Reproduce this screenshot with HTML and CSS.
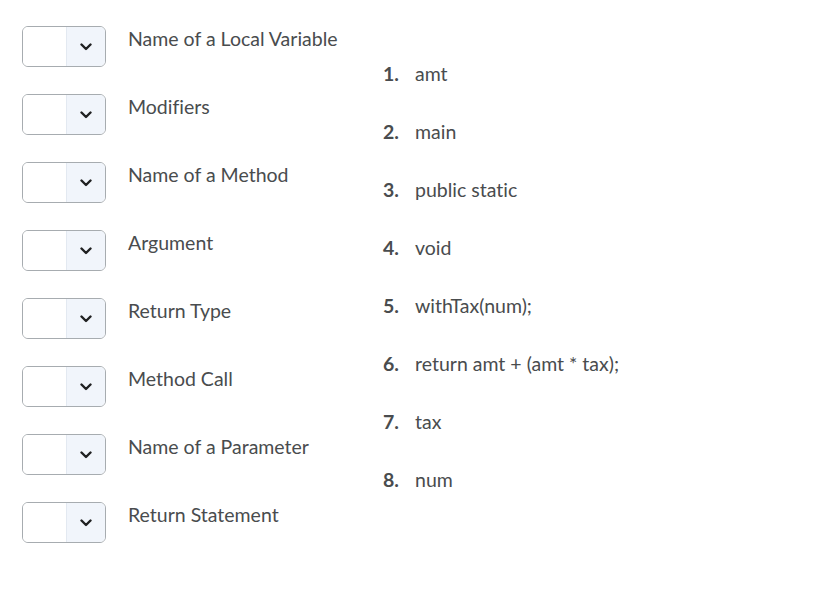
FILE: index.html
```html
<!DOCTYPE html>
<html>
<head>
<meta charset="utf-8">
<link rel="stylesheet" href="styles.css">
</head>
<body>
<div class="page">
  <div class="matches">
    <div class="row"><div class="select"><span class="val"></span><span class="btn"><svg width="12" height="8" viewBox="0 0 12 8"><path d="M1.5 1.5 L6 6 L10.5 1.5" fill="none" stroke="#202122" stroke-width="2.4" stroke-linecap="round" stroke-linejoin="round"/></svg></span></div><div class="label">Name of a Local Variable</div></div>
    <div class="row"><div class="select"><span class="val"></span><span class="btn"><svg width="12" height="8" viewBox="0 0 12 8"><path d="M1.5 1.5 L6 6 L10.5 1.5" fill="none" stroke="#202122" stroke-width="2.4" stroke-linecap="round" stroke-linejoin="round"/></svg></span></div><div class="label">Modifiers</div></div>
    <div class="row"><div class="select"><span class="val"></span><span class="btn"><svg width="12" height="8" viewBox="0 0 12 8"><path d="M1.5 1.5 L6 6 L10.5 1.5" fill="none" stroke="#202122" stroke-width="2.4" stroke-linecap="round" stroke-linejoin="round"/></svg></span></div><div class="label">Name of a Method</div></div>
    <div class="row"><div class="select"><span class="val"></span><span class="btn"><svg width="12" height="8" viewBox="0 0 12 8"><path d="M1.5 1.5 L6 6 L10.5 1.5" fill="none" stroke="#202122" stroke-width="2.4" stroke-linecap="round" stroke-linejoin="round"/></svg></span></div><div class="label">Argument</div></div>
    <div class="row"><div class="select"><span class="val"></span><span class="btn"><svg width="12" height="8" viewBox="0 0 12 8"><path d="M1.5 1.5 L6 6 L10.5 1.5" fill="none" stroke="#202122" stroke-width="2.4" stroke-linecap="round" stroke-linejoin="round"/></svg></span></div><div class="label">Return Type</div></div>
    <div class="row"><div class="select"><span class="val"></span><span class="btn"><svg width="12" height="8" viewBox="0 0 12 8"><path d="M1.5 1.5 L6 6 L10.5 1.5" fill="none" stroke="#202122" stroke-width="2.4" stroke-linecap="round" stroke-linejoin="round"/></svg></span></div><div class="label">Method Call</div></div>
    <div class="row"><div class="select"><span class="val"></span><span class="btn"><svg width="12" height="8" viewBox="0 0 12 8"><path d="M1.5 1.5 L6 6 L10.5 1.5" fill="none" stroke="#202122" stroke-width="2.4" stroke-linecap="round" stroke-linejoin="round"/></svg></span></div><div class="label">Name of a Parameter</div></div>
    <div class="row"><div class="select"><span class="val"></span><span class="btn"><svg width="12" height="8" viewBox="0 0 12 8"><path d="M1.5 1.5 L6 6 L10.5 1.5" fill="none" stroke="#202122" stroke-width="2.4" stroke-linecap="round" stroke-linejoin="round"/></svg></span></div><div class="label">Return Statement</div></div>
  </div>
  <ol class="choices">
    <li><span class="num">1.</span><span class="txt">amt</span></li>
    <li><span class="num">2.</span><span class="txt">main</span></li>
    <li><span class="num">3.</span><span class="txt">public static</span></li>
    <li><span class="num">4.</span><span class="txt">void</span></li>
    <li><span class="num">5.</span><span class="txt">withTax(num);</span></li>
    <li><span class="num">6.</span><span class="txt">return amt + (amt * tax);</span></li>
    <li><span class="num">7.</span><span class="txt">tax</span></li>
    <li><span class="num">8.</span><span class="txt">num</span></li>
  </ol>
</div>
</body>
</html>
```

FILE: styles.css
```css
html, body {
  margin: 0;
  padding: 0;
  background: #ffffff;
}
body {
  font-family: Lato, "Noto Sans", sans-serif;
  color: #494c4e;
  font-size: 19.5px;
  font-variant-ligatures: none;
}
.page {
  display: flex;
  padding: 26px 0 0 22px;
}
.matches {
  display: flex;
  flex-direction: column;
  gap: 27px;
  width: 361px;
}
.row {
  display: flex;
  align-items: flex-start;
  height: 41px;
}
.select {
  box-sizing: border-box;
  width: 84px;
  height: 41px;
  border: 1px solid #a7acb0;
  border-radius: 6px;
  display: flex;
  overflow: hidden;
  flex-shrink: 0;
}
.val {
  width: 43px;
  background: #fff;
  border-right: 1px solid #e3e9f1;
}
.btn {
  flex: 1;
  background: #f1f5fb;
  display: flex;
  align-items: center;
  justify-content: center;
}
.btn svg { display: block; margin-top: 1px; }
.label {
  margin-left: 22px;
  line-height: 26px;
  margin-top: 0;
}
.choices {
  list-style: none;
  margin: 0;
  padding: 35px 0 0 0;
  display: flex;
  flex-direction: column;
  gap: 32px;
}
.choices li {
  display: flex;
  line-height: 26px;
}
.num {
  width: 32px;
  font-weight: 700;
  color: #494c4e;
}
```
